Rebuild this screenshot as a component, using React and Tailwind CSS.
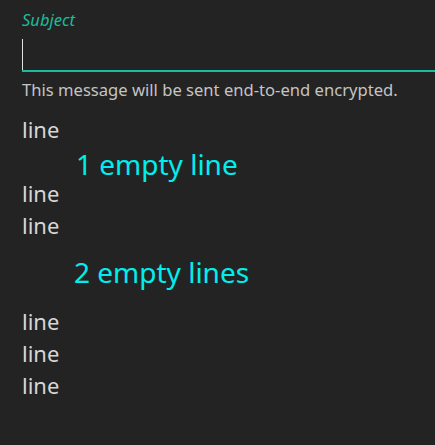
export default function App() {
  const lines = ["line", "", "line", "line", "", "", "line", "line", "line"];
  return (
    <div className="relative w-[435px] h-[445px] bg-[#232323] overflow-hidden" style={{ fontFamily: '"Noto Sans", sans-serif' }}>
      <div className="pl-[22px] pt-[8px]">
        <div className="italic text-[16.5px] leading-[24px] text-[#1abc9c]">Subject</div>
        <div className="mt-[6px] h-[34px] border-b-2 border-[#1abc9c] flex items-start">
          <div className="w-px h-[31px] bg-[#e0e0e0] mt-[1px]" />
        </div>
        <div className="mt-[6px] text-[16.6px] leading-[24px] text-[#c4c4c4]">This message will be sent end-to-end encrypted.</div>
        <div className="mt-[11px] text-[22px] leading-[32px] text-[#d6d6d6]">
          {lines.map((l, i) => (
            <div key={i} className="h-[32px]">{l}</div>
          ))}
        </div>
      </div>
      <div className="absolute left-[76px] top-[144px] text-[28px] leading-[40px] text-[#00eeee]">1 empty line</div>
      <div className="absolute left-[74px] top-[252px] text-[28px] leading-[40px] text-[#00eeee]">2 empty lines</div>
    </div>
  );
}
